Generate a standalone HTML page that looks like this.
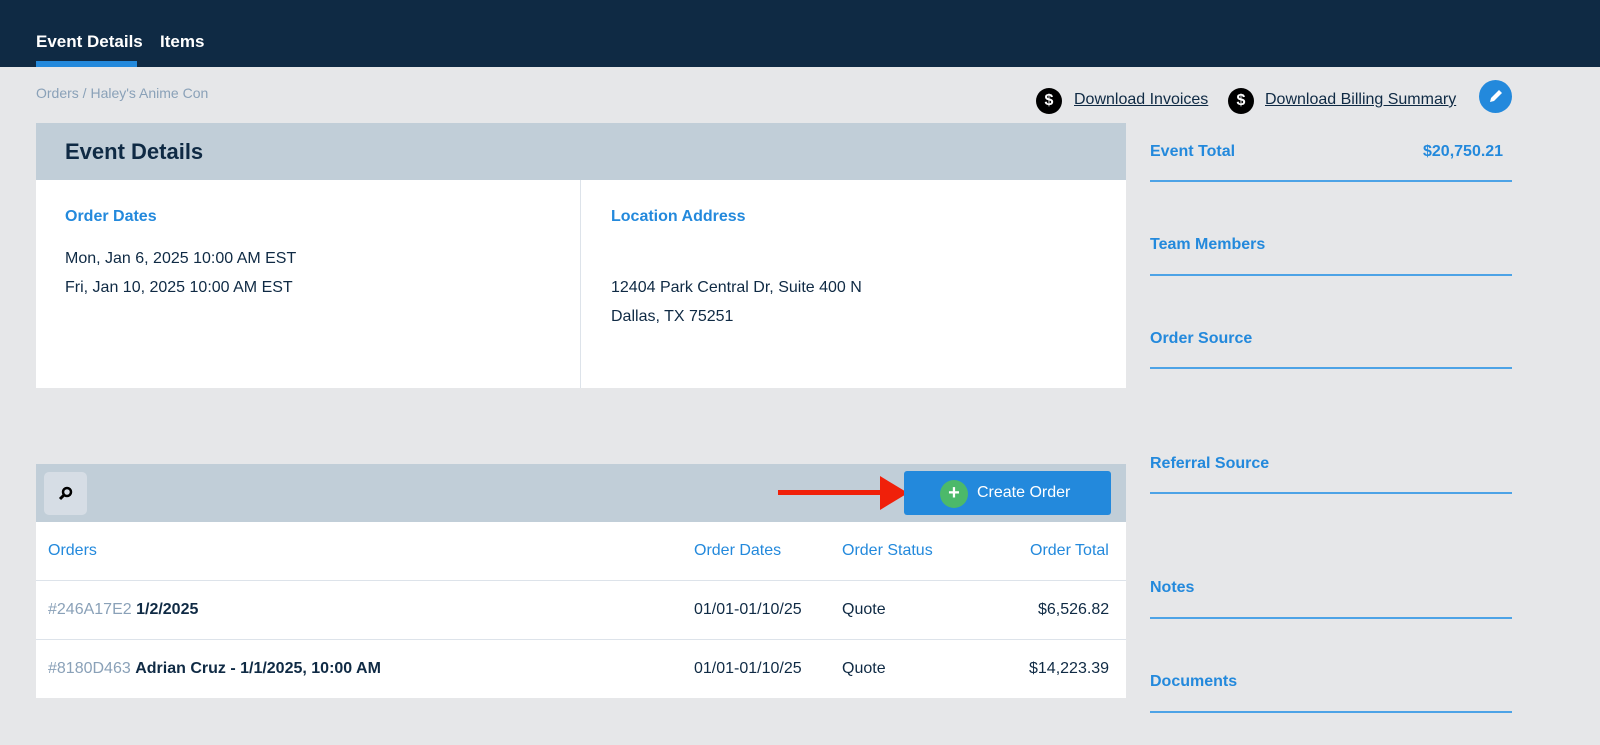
<!DOCTYPE html>
<html><head><style>
*{box-sizing:border-box;margin:0;padding:0}
body{width:1600px;height:745px;background:#e6e7e9;font-family:"Liberation Sans",Arial,sans-serif;position:relative;overflow:hidden;color:#0f2a44}
.a{position:absolute}
.blue{color:#2389dc}
.lbl{font-weight:bold;font-size:16px;color:#2389dc}
.line{height:2px;background:#4da3e6;width:362px;left:1150px}
</style></head><body>
<div class="a" style="left:0;top:0;width:1600px;height:67px;background:#0f2a44"></div>
<div class="a" style="left:36px;top:32px;color:#fff;font-weight:bold;font-size:17px">Event Details</div>
<div class="a" style="left:160px;top:32px;color:#fff;font-weight:bold;font-size:17px">Items</div>
<div class="a" style="left:36px;top:61px;width:101px;height:6px;background:#2389dc"></div>
<div class="a" style="left:36px;top:85px;color:#8aa1b8;font-size:14px">Orders / Haley's Anime Con</div>

<div class="a" style="left:1036px;top:88px;width:26px;height:26px;border-radius:50%;background:#000;color:#fff;font-weight:bold;font-size:16px;text-align:center;line-height:26px">$</div>
<div class="a" style="left:1074px;top:91px;font-size:16px;text-decoration:underline;color:#0f2a44">Download Invoices</div>
<div class="a" style="left:1228px;top:88px;width:26px;height:26px;border-radius:50%;background:#000;color:#fff;font-weight:bold;font-size:16px;text-align:center;line-height:26px">$</div>
<div class="a" style="left:1265px;top:91px;font-size:16px;text-decoration:underline;color:#0f2a44">Download Billing Summary</div>
<div class="a" style="left:1479px;top:80px;width:33px;height:33px;border-radius:50%;background:#2389dc">
<svg width="33" height="33" viewBox="0 0 33 33"><path d="M11 22l1-4 8-8 3 3-8 8z" fill="#fff"/></svg></div>

<div class="a" style="left:36px;top:123px;width:1090px;height:57px;background:#c1ced8"></div>
<div class="a" style="left:65px;top:139px;font-weight:bold;font-size:22px;color:#0f2a44">Event Details</div>
<div class="a" style="left:36px;top:180px;width:1090px;height:208px;background:#fff"></div>
<div class="a" style="left:580px;top:180px;width:1px;height:208px;background:#dde3ea"></div>
<div class="a lbl" style="left:65px;top:208px">Order Dates</div>
<div class="a" style="left:65px;top:244px;font-size:16px;line-height:29px">Mon, Jan 6, 2025 10:00 AM EST<br>Fri, Jan 10, 2025 10:00 AM EST</div>
<div class="a lbl" style="left:611px;top:208px">Location Address</div>
<div class="a" style="left:611px;top:273px;font-size:16px;line-height:29px">12404 Park Central Dr, Suite 400 N<br>Dallas, TX 75251</div>

<div class="a" style="left:36px;top:464px;width:1090px;height:58px;background:#c1ced8"></div>
<div class="a" style="left:44px;top:472px;width:43px;height:43px;border-radius:5px;background:#d6dde5">
<svg width="43" height="43" viewBox="0 0 43 43"><circle cx="23" cy="20" r="4" fill="none" stroke="#000" stroke-width="2.5"/><path d="M20 23l-4 4" stroke="#000" stroke-width="3"/></svg></div>
<svg class="a" style="left:778px;top:476px" width="130" height="34"><rect x="0" y="14" width="105" height="5" fill="#f0200a"/><path d="M102 0L130 17L102 34z" fill="#f0200a"/></svg>
<div class="a" style="left:904px;top:471px;width:207px;height:44px;background:#2389dc;border-radius:3px"></div>
<div class="a" style="left:940px;top:480px;width:28px;height:28px;border-radius:50%;background:#4cb96a;color:#fff;font-weight:bold;font-size:20px;text-align:center;line-height:27px">+</div>
<div class="a" style="left:977px;top:484px;color:#fff;font-size:16px">Create Order</div>

<div class="a" style="left:36px;top:522px;width:1090px;height:176px;background:#fff"></div>
<div class="a" style="left:36px;top:580px;width:1090px;height:1px;background:#dde3ea"></div>
<div class="a" style="left:36px;top:639px;width:1090px;height:1px;background:#dde3ea"></div>
<div class="a blue" style="left:48px;top:542px;font-size:16px">Orders</div>
<div class="a blue" style="left:694px;top:542px;font-size:16px">Order Dates</div>
<div class="a blue" style="left:842px;top:542px;font-size:16px">Order Status</div>
<div class="a blue" style="left:1030px;top:542px;font-size:16px">Order Total</div>
<div class="a" style="left:48px;top:601px;font-size:16px"><span style="color:#8aa1b8">#246A17E2</span> <b>1/2/2025</b></div>
<div class="a" style="left:694px;top:601px;font-size:16px">01/01-01/10/25</div>
<div class="a" style="left:842px;top:601px;font-size:16px">Quote</div>
<div class="a" style="left:1038px;top:601px;font-size:16px">$6,526.82</div>
<div class="a" style="left:48px;top:660px;font-size:16px"><span style="color:#8aa1b8">#8180D463</span> <b>Adrian Cruz - 1/1/2025, 10:00 AM</b></div>
<div class="a" style="left:694px;top:660px;font-size:16px">01/01-01/10/25</div>
<div class="a" style="left:842px;top:660px;font-size:16px">Quote</div>
<div class="a" style="left:1029px;top:660px;font-size:16px">$14,223.39</div>

<div class="a lbl" style="left:1150px;top:143px">Event Total</div>
<div class="a lbl" style="left:1423px;top:143px">$20,750.21</div>
<div class="a line" style="top:180px"></div>
<div class="a lbl" style="left:1150px;top:236px">Team Members</div>
<div class="a line" style="top:274px"></div>
<div class="a lbl" style="left:1150px;top:330px">Order Source</div>
<div class="a line" style="top:367px"></div>
<div class="a lbl" style="left:1150px;top:455px">Referral Source</div>
<div class="a line" style="top:492px"></div>
<div class="a lbl" style="left:1150px;top:579px">Notes</div>
<div class="a line" style="top:617px"></div>
<div class="a lbl" style="left:1150px;top:673px">Documents</div>
<div class="a line" style="top:711px"></div>
</body></html>
